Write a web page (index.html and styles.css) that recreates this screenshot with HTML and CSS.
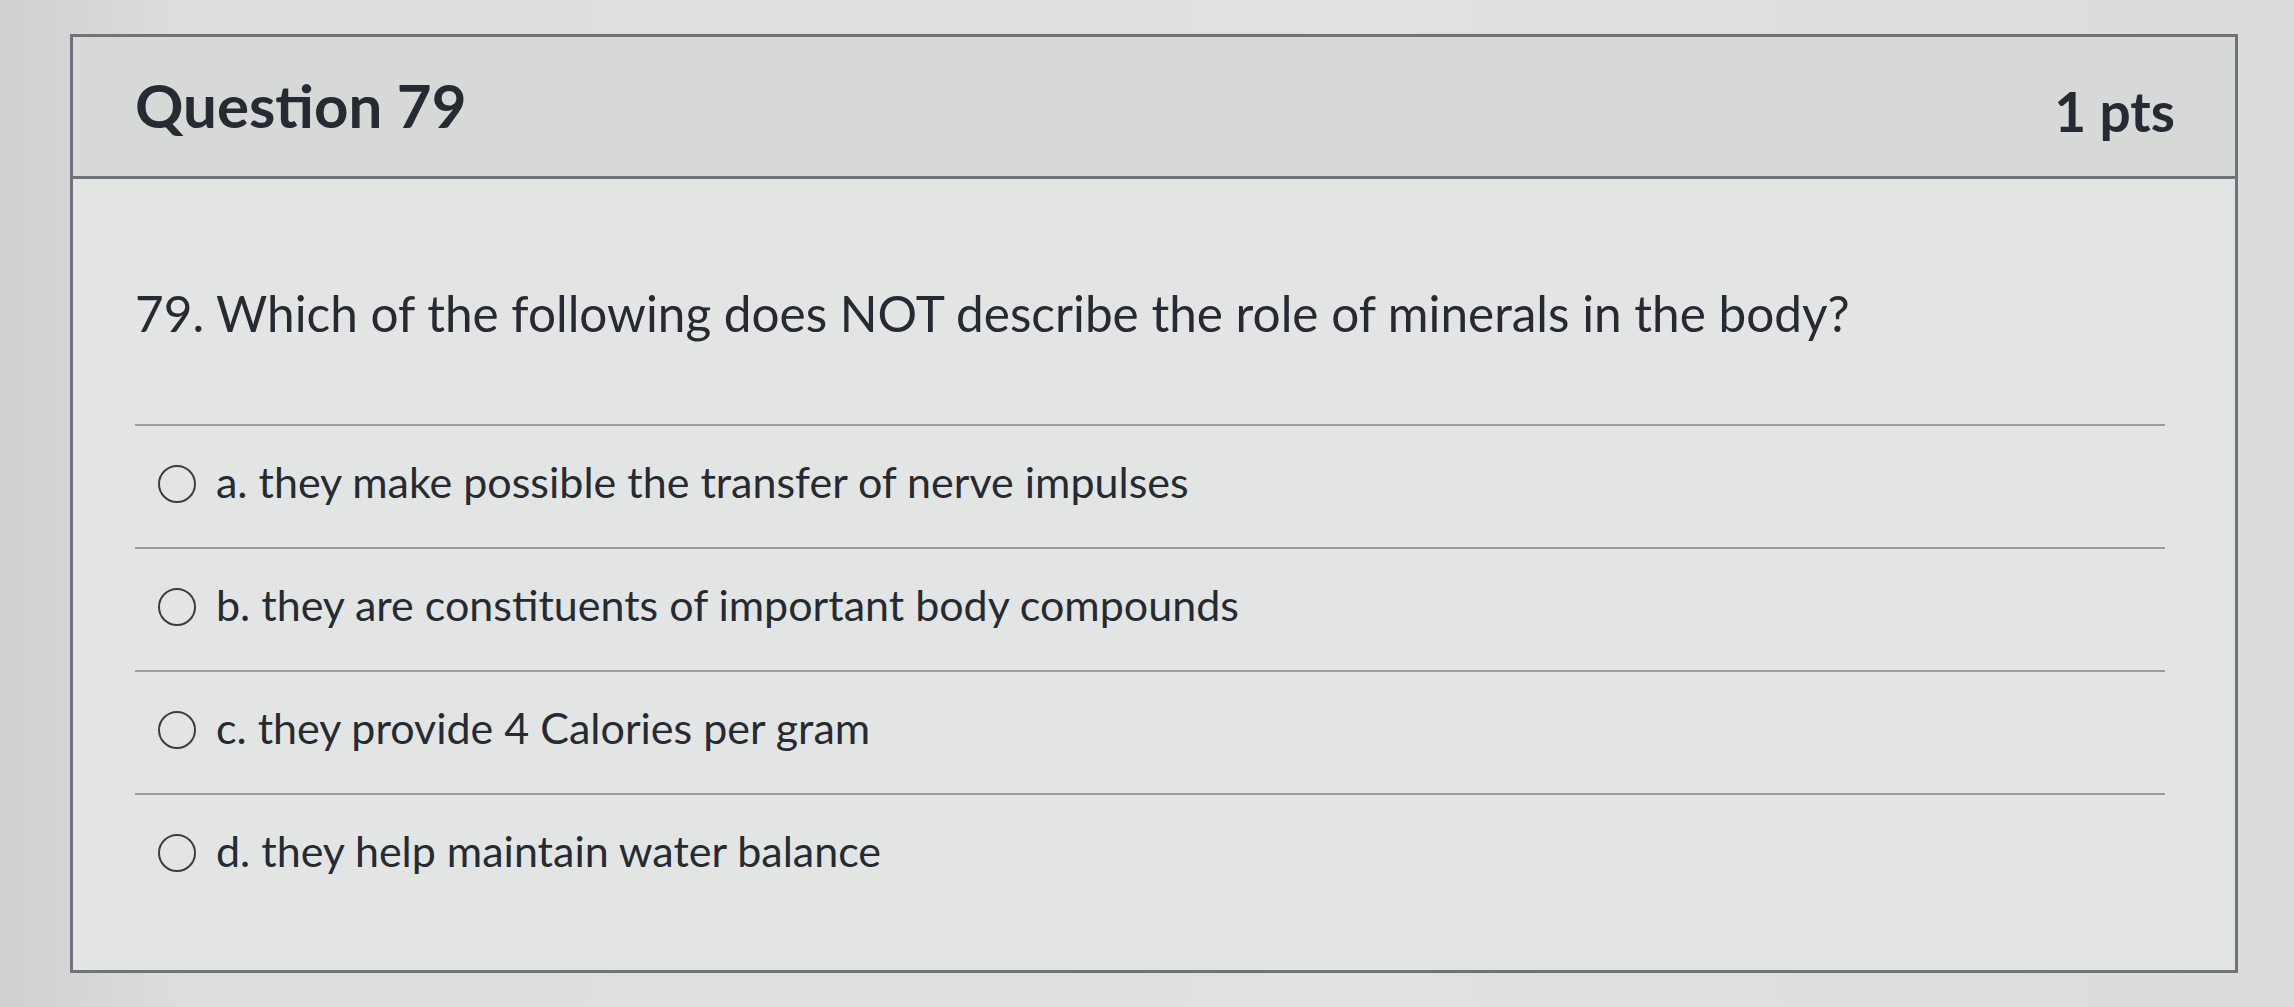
FILE: index.html
```html
<!DOCTYPE html>
<html>
<head>
<meta charset="utf-8">
<link rel="stylesheet" href="styles.css">
</head>
<body>
<div class="page">
  <div class="card">
    <div class="header">
      <h2 class="title">Question 79</h2>
      <span class="pts">1 pts</span>
    </div>
    <div class="body">
      <p class="question">79. Which of the following does NOT describe the role of minerals in the body?</p>
      <div class="answers">
        <div class="answer"><span class="radio"></span><span class="label">a. they make possible the transfer of nerve impulses</span></div>
        <div class="answer"><span class="radio"></span><span class="label">b. they are constituents of important body compounds</span></div>
        <div class="answer"><span class="radio"></span><span class="label">c. they provide 4 Calories per gram</span></div>
        <div class="answer"><span class="radio"></span><span class="label">d. they help maintain water balance</span></div>
      </div>
    </div>
  </div>
</div>
</body>
</html>
```
FILE: styles.css
```css
html, body {
  margin: 0;
  padding: 0;
}
body {
  background: linear-gradient(90deg, #cfd1d0 0%, #dcdedd 8%, #e0e2e1 60%, #dadcdb 100%);
  font-family: Lato, "Open Sans", sans-serif;
  color: #262b33;
  width: 2294px;
  height: 1007px;
  overflow: hidden;
}
.page {
  padding: 34px 0 0 70px;
}
.card {
  width: 2168px;
  height: 939px;
  box-sizing: border-box;
  border: 3px solid #6f747a;
  background: #e3e5e4;
  display: flex;
  flex-direction: column;
}
.header {
  height: 142px;
  box-sizing: border-box;
  background: #d7d9d8;
  border-bottom: 3px solid #6f747a;
  display: flex;
  align-items: center;
  justify-content: space-between;
  padding: 0 60px 0 62px;
}
.title {
  margin: 0;
  font-size: 60px;
  font-weight: 700;
  line-height: 1;
  position: relative;
  top: -2px;
}
.pts {
  font-size: 55px;
  font-weight: 700;
  line-height: 1;
  position: relative;
  top: 5px;
}
.body {
  padding: 0 70px 0 62px;
}
.question {
  margin: 0;
  padding-top: 105px;
  height: 140px;
  font-size: 49.5px;
  line-height: 1.2;
}
.answers {
  display: flex;
  flex-direction: column;
}
.answer {
  border-top: 2px solid #9a9d9e;
  height: 121px;
  display: flex;
  align-items: center;
  padding-left: 23px;
  gap: 20px;
}
.radio {
  width: 34px;
  height: 34px;
  border: 2.5px solid #3a3f45;
  border-radius: 50%;
  flex: none;
  position: relative;
  top: -3px;
}
.label {
  font-size: 43px;
  position: relative;
  top: -5px;
}
```
